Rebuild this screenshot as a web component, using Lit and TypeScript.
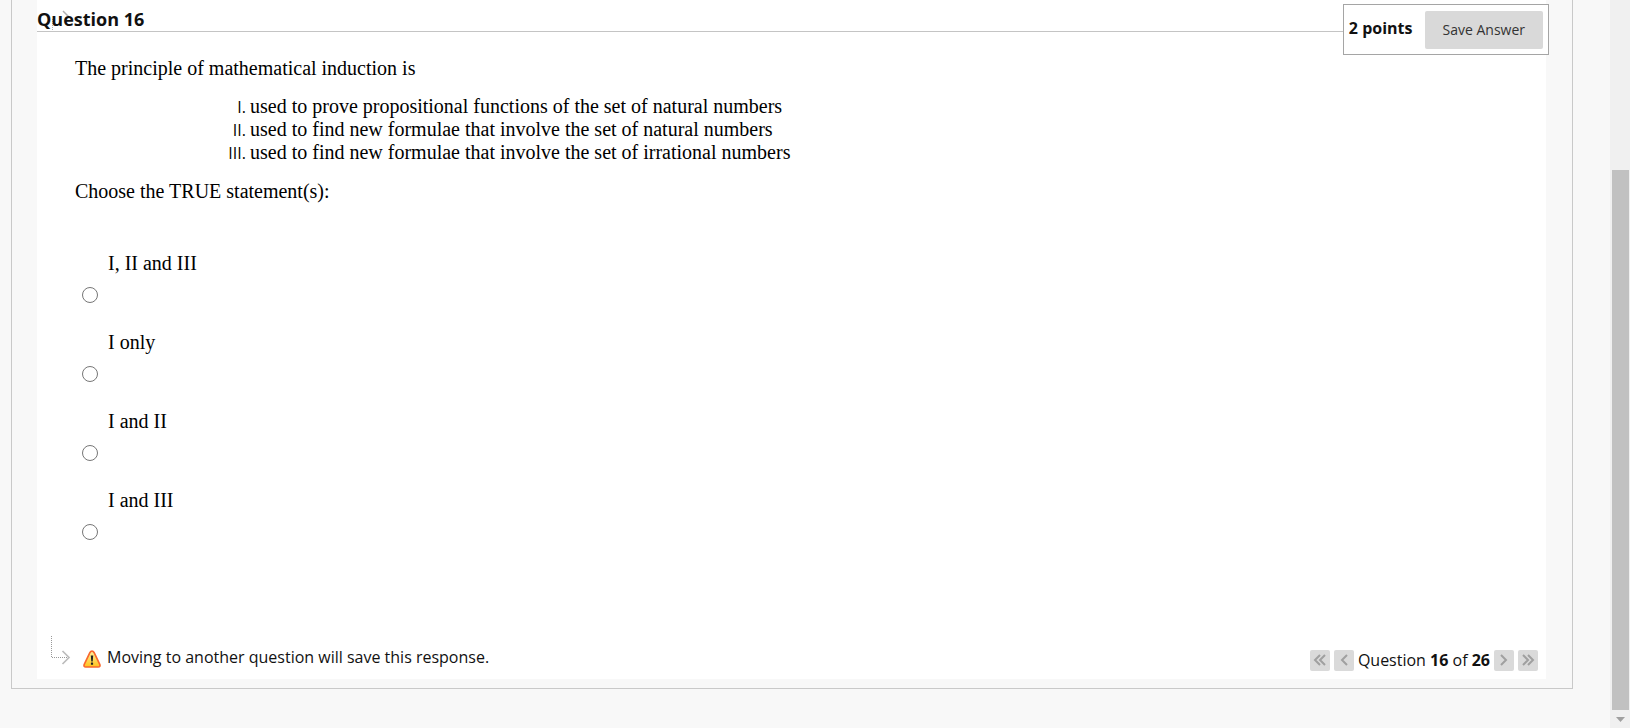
import { LitElement, html, css, svg } from "lit";
import { customElement, state } from "lit/decorators.js";

const chevron = (x: number, dir: number) =>
  svg`<path d=${`M${x} 1l${5 * dir} 5l${-5 * dir} 5`} />`;

@customElement("nav-button")
class NavButton extends LitElement {
  static properties = { dir: { type: Number }, double: { type: Boolean }, name: {} };
  declare dir: number;
  declare double: boolean;
  declare name: string;

  static styles = css`
    :host { display: block; }
    .nav {
      display: flex;
      align-items: center;
      justify-content: center;
      width: 20px;
      height: 21px;
      padding: 0;
      border: 0;
      border-radius: 2px;
      background: #dadada;
      cursor: pointer;
    }
    .glyph { fill: none; stroke: #a0a0a0; stroke-width: 2; }
  `;

  render() {
    const d = this.dir;
    const first = d < 0 ? 7 : 1;
    return html`<button class="nav" type="button" aria-label=${this.name}>
      ${this.double
        ? html`<svg class="glyph" width="13" height="12" viewBox="0 0 13 12">${chevron(first, d)}${chevron(first + 5, d)}</svg>`
        : html`<svg class="glyph" width="8" height="12" viewBox="0 0 8 12">${chevron(first, d)}</svg>`}
    </button>`;
  }
}

@customElement("app-root")
class AppRoot extends LitElement {
  @state() private answer = -1;

  private statements = [
    "used to prove propositional functions of the set of natural numbers",
    "used to find new formulae that involve the set of natural numbers",
    "used to find new formulae that involve the set of irrational numbers",
  ];
  private options = ["I, II and III", "I only", "I and II", "I and III"];

  static styles = css`
    :host {
      display: block;
      font-family: "Open Sans", sans-serif;
      font-size: 16px;
      color: #111;
    }
    * { box-sizing: border-box; }
    .window {
      display: flex;
      min-height: 100vh;
      background: #f8f8f8;
    }
    .page { flex: 1; padding: 0 37px 24px 11px; }
    .frame {
      border: 1px solid #c9c9c9;
      border-top: 0;
      padding: 0 26px 9px 25px;
    }
    .card { position: relative; background: #fff; }
    .header {
      height: 32px;
      padding: 7px 0 0;
      border-bottom: 1px solid #c4c4c4;
    }
    .title {
      position: relative;
      margin: 0;
      font-size: 18px;
      line-height: 24px;
      font-weight: 700;
    }
    .ghost { position: absolute; left: 14px; top: 10px; }
    .points {
      position: absolute;
      right: -3px;
      top: 4px;
      display: flex;
      align-items: center;
      gap: 12px;
      padding: 6px 5px 5px;
      border: 1px solid #a5a5a5;
      background: #fff;
      font-weight: 700;
      line-height: 22px;
    }
    .score { padding-bottom: 4px; }
    .save {
      height: 38px;
      padding: 0 18px;
      border: 0;
      border-radius: 2px;
      background: #d9d9d9;
      color: #333;
      font: 14px/20px "Open Sans", sans-serif;
      cursor: pointer;
    }
    .body {
      padding: 25px 38px 0;
      font-family: "Liberation Serif", serif;
      font-size: 20px;
      line-height: 23px;
      color: #000;
    }
    .text { margin: 0; }
    .list {
      margin: 15px 0 16px;
      padding: 0 0 0 175px;
      list-style: upper-roman;
    }
    .list li::marker { font-family: "Open Sans", sans-serif; font-size: 16px; }
    .options {
      display: grid;
      gap: 28px;
      margin: 49px 0 0;
      padding: 0 0 0 7px;
      border: 0;
    }
    .option { display: flex; flex-direction: column; gap: 12px; }
    .option label { padding-left: 26px; }
    .radio { width: 16px; height: 16px; margin: 0; }
    .footer {
      display: flex;
      justify-content: space-between;
      align-items: flex-end;
      padding: 96px 8px 8px 14px;
      line-height: 22px;
    }
    .notice { display: flex; align-items: flex-start; padding-bottom: 3px; }
    .notice-text { margin: 10px 0 0 6px; }
    .warn { margin: 14px 0 0 12px; }
    .pager { display: flex; align-items: center; gap: 4px; }
    .count { line-height: 22px; }
    .bar {
      display: flex;
      flex-direction: column;
      align-items: center;
      width: 20px;
      height: 100vh;
      padding: 170px 1px 0 2px;
      background: #f0f0f0;
    }
    .thumb { flex: 1; width: 17px; background: #c1c1c1; }
    .down { height: 18px; }
  `;

  render() {
    return html`
      <div class="window">
        <main class="page">
          <div class="frame">
            <div class="card">
              <header class="header">
                <svg class="ghost" width="20" height="21" viewBox="0 0 20 21" fill="none" stroke="#b0b0b0" aria-hidden="true">
                  <path d="M1.500 9V21" stroke-dasharray="1 1" />
                  <path d="M12 1l6 6" stroke-width="1.500" />
                </svg>
                <h1 class="title">Question 16</h1>
              </header>
              <div class="points">
                <span class="score">2 points</span>
                <button class="save" type="button">Save Answer</button>
              </div>
              <section class="body">
                <p class="text">The principle of mathematical induction is</p>
                <ol class="list">${this.statements.map((s) => html`<li>${s}</li>`)}</ol>
                <p class="text">Choose the TRUE statement(s):</p>
                <fieldset class="options" aria-label="Answers">
                  ${this.options.map(
                    (o, i) => html`<div class="option">
                      <label for="answer-${i}">${o}</label>
                      <input class="radio" type="radio" name="answer" id="answer-${i}"
                        .checked=${this.answer === i} @change=${() => (this.answer = i)} />
                    </div>`
                  )}
                </fieldset>
              </section>
              <footer class="footer">
                <div class="notice">
                  <svg width="20" height="30" viewBox="0 0 20 30" fill="none" stroke="#999" aria-hidden="true">
                    <path d="M.5 0V21M1 21.500H18" stroke-dasharray="1 1" />
                    <path d="M11.500 15l6.500 6.500-6.500 6.500" stroke="#bcbcbc" stroke-width="1.700" />
                  </svg>
                  <svg class="warn" width="18" height="18" viewBox="0 0 18 18" aria-hidden="true">
                    <defs>
                      <linearGradient id="amber" x2="0" y2="1">
                        <stop offset="0" stop-color="#fff0a0" />
                        <stop offset="1" stop-color="#ffc21a" />
                      </linearGradient>
                    </defs>
                    <path d="M9 1.200Q10.300 1.200 11 2.500L16.800 14.500Q17.500 17 15.300 17H2.700Q.5 17 1.200 14.500L7 2.500Q7.700 1.200 9 1.200Z"
                      fill="url(#amber)" stroke="#f9682c" stroke-width="1.700" />
                    <path d="M7.800 5.500h2.400L9.700 11.500H8.300Z" fill="#222" />
                    <rect x="7.900" y="12.500" width="2.200" height="2.200" rx=".5" fill="#222" />
                  </svg>
                  <span class="notice-text">Moving to another question will save this response.</span>
                </div>
                <nav class="pager" aria-label="Questions">
                  <nav-button .dir=${-1} .double=${true} .name=${"First question"}></nav-button>
                  <nav-button .dir=${-1} .name=${"Previous question"}></nav-button>
                  <span class="count">Question <b>16</b> of <b>26</b></span>
                  <nav-button .dir=${1} .name=${"Next question"}></nav-button>
                  <nav-button .dir=${1} .double=${true} .name=${"Last question"}></nav-button>
                </nav>
              </footer>
            </div>
          </div>
        </main>
        <div class="bar" aria-hidden="true">
          <div class="thumb"></div>
          <svg class="down" width="17" height="18" viewBox="0 0 17 18"><path d="M4 7h9l-4.500 5z" fill="#a0a0a0" /></svg>
        </div>
      </div>
    `;
  }
}
